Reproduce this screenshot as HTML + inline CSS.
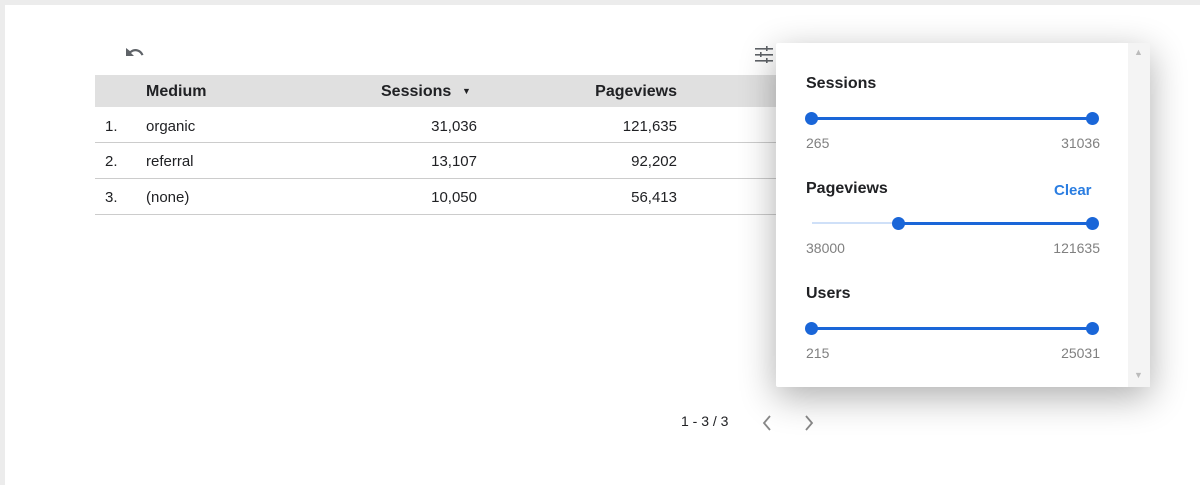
<!DOCTYPE html>
<html><head><style>
body{margin:0;width:1200px;height:477px;background:#ececec;font-family:"Liberation Sans",sans-serif;position:relative;overflow:hidden}
.page{position:absolute;left:5px;top:5px;width:1200px;height:480px;background:#fff}
.abs{position:absolute}
.hdr{left:95px;top:75px;width:681px;height:32px;background:#e0e0e0}
.row{left:95px;width:681px;height:35px;border-bottom:1px solid #ccc}
.t{position:absolute;font-size:15px;color:#202124;white-space:nowrap}
.b{font-weight:bold;font-size:16px}
.r{text-align:right}
.pop{left:776px;top:43px;width:374px;height:344px;background:#fff;box-shadow:0 10px 36px rgba(0,0,0,.32);border-radius:2px}
.sb{left:1128px;top:43px;width:22px;height:344px;background:#f4f4f4}
.lbl{font-size:16px;font-weight:bold;color:#202124}
.num{font-size:14px;color:#808080}
.track{height:3px;background:#1a66d8;border-radius:2px}
.dot{width:13px;height:13px;border-radius:50%;background:#1a66d8}
</style></head><body>
<div class="page"></div>
<svg class="abs" style="left:123px;top:45px" width="24" height="18" viewBox="0 0 24 18"><path d="M3 3v8h8l-3-3c1.5-1.3 3-1.8 4.5-1.8 2.8 0 5 1.8 6 4.3l2-.7C19.3 6.5 16.2 4 12.5 4c-2 0-3.9.8-5.5 2.1z" fill="#5f6368"/></svg>
<svg class="abs" style="left:754px;top:45px" width="20" height="20" viewBox="0 0 20 20" fill="#5f6368"><rect x="1" y="3" width="18" height="1.6"/><rect x="1" y="9" width="18" height="1.6"/><rect x="1" y="15" width="18" height="1.6"/><rect x="12" y="1" width="1.6" height="5"/><rect x="6" y="7" width="1.6" height="5"/><rect x="12" y="13" width="1.6" height="5"/></svg>
<div class="abs hdr"></div>
<div class="t b" style="left:146px;top:83px">Medium</div>
<div class="t b" style="left:381px;top:83px">Sessions</div>
<div class="t" style="left:462px;top:86px;font-size:9px">▼</div>
<div class="t b r" style="left:577px;top:83px;width:100px">Pageviews</div>
<div class="abs row" style="top:107px"></div>
<div class="abs row" style="top:143px"></div>
<div class="abs row" style="top:179px"></div>
<div class="t" style="left:105px;top:118px">1.</div><div class="t" style="left:146px;top:118px">organic</div><div class="t r" style="left:377px;top:118px;width:100px">31,036</div><div class="t r" style="left:577px;top:118px;width:100px">121,635</div>
<div class="t" style="left:105px;top:153px">2.</div><div class="t" style="left:146px;top:153px">referral</div><div class="t r" style="left:377px;top:153px;width:100px">13,107</div><div class="t r" style="left:577px;top:153px;width:100px">92,202</div>
<div class="t" style="left:105px;top:189px">3.</div><div class="t" style="left:146px;top:189px">(none)</div><div class="t r" style="left:377px;top:189px;width:100px">10,050</div><div class="t r" style="left:577px;top:189px;width:100px">56,413</div>
<div class="t" style="left:681px;top:413px;font-size:14px">1 - 3 / 3</div>
<svg class="abs" style="left:760px;top:414px" width="60" height="18"><path d="M10 2l-6 7 6 7" stroke="#888" stroke-width="1.8" fill="none"/><path d="M46 2l6 7-6 7" stroke="#888" stroke-width="1.8" fill="none"/></svg>
<div class="abs pop"></div>
<div class="abs sb"></div>
<div class="t" style="left:1134px;top:47px;font-size:9px;color:#bbb">▲</div>
<div class="t" style="left:1134px;top:370px;font-size:9px;color:#bbb">▼</div>
<div class="t lbl" style="left:806px;top:75px">Sessions</div>
<div class="abs track" style="left:812px;top:117px;width:281px"></div>
<div class="abs dot" style="left:805px;top:112px"></div><div class="abs dot" style="left:1086px;top:112px"></div>
<div class="t num" style="left:806px;top:135px">265</div><div class="t num r" style="left:1000px;top:135px;width:100px">31036</div>
<div class="t lbl" style="left:806px;top:180px">Pageviews</div>
<div class="t" style="left:1054px;top:182px;font-size:15px;font-weight:bold;color:#2a7de1">Clear</div>
<div class="abs" style="left:812px;top:222px;width:88px;height:2px;background:#cfe0f8"></div>
<div class="abs track" style="left:899px;top:222px;width:194px"></div>
<div class="abs dot" style="left:892px;top:217px"></div><div class="abs dot" style="left:1086px;top:217px"></div>
<div class="t num" style="left:806px;top:240px">38000</div><div class="t num r" style="left:1000px;top:240px;width:100px">121635</div>
<div class="t lbl" style="left:806px;top:285px">Users</div>
<div class="abs track" style="left:812px;top:327px;width:281px"></div>
<div class="abs dot" style="left:805px;top:322px"></div><div class="abs dot" style="left:1086px;top:322px"></div>
<div class="t num" style="left:806px;top:345px">215</div><div class="t num r" style="left:1000px;top:345px;width:100px">25031</div>
</body></html>
